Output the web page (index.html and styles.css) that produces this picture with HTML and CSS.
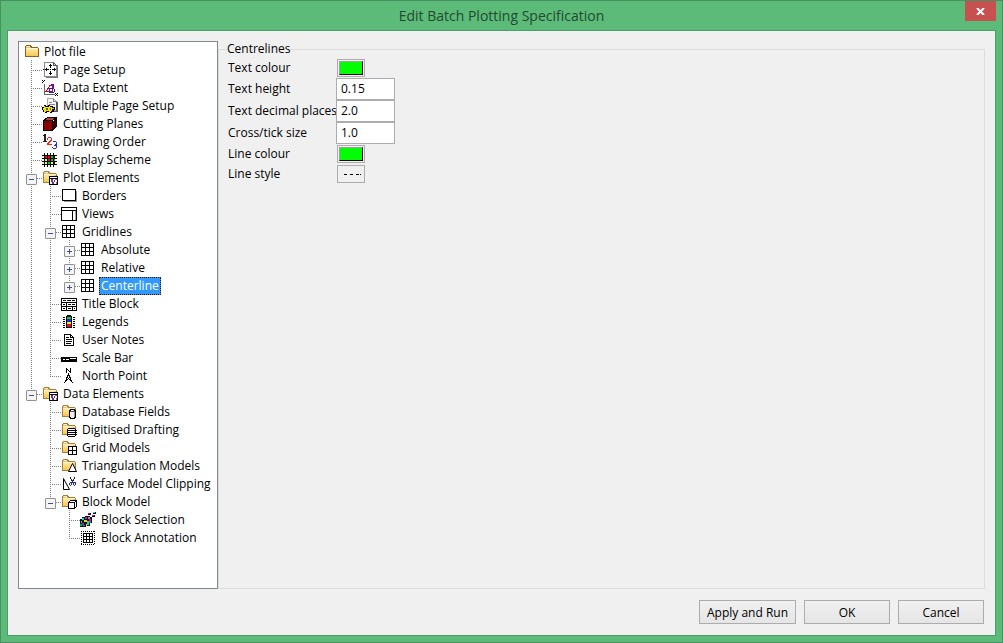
FILE: index.html
```html
<!DOCTYPE html>
<html lang="en">
  <head>
    <meta charset="UTF-8" />
    <meta name="viewport" content="width=device-width, initial-scale=1.0" />
    <title>Edit Batch Plotting Specification</title>
    <link rel="stylesheet" href="styles.css">
  </head>
  <body>
    <!-- shared icons -->
    <svg class="sprite" aria-hidden="true">
      <defs>
        <linearGradient id="folder-fill" x1="0" y1="0" x2="0" y2="1">
          <stop offset="0" stop-color="#ffeaa0" />
          <stop offset="1" stop-color="#f8c452" />
        </linearGradient>
      </defs>
      <symbol id="folder" viewBox="0 0 16 16">
        <path d="M1.500 12.500v-10l1-1h4l1 2h6l1 1v8z" fill="#e8c078" stroke="#8a5f24" />
        <path d="M2 5h12v7h-12z" fill="url(#folder-fill)" />
        <path d="M2 4.500h12M3 2.500h3" stroke="#fff6d6" fill="none" />
      </symbol>
      <symbol id="folder-small" viewBox="0 0 16 16">
        <path d="M.5 12.500v-10l1-1h4l1 2h6l1 1v8z" fill="#eec478" stroke="#a87c3c" />
        <path d="M1 5h10v7h-10z" fill="url(#folder-fill)" />
        <path d="M2 2.500h3M1 4.500h12" stroke="#fff2cc" fill="none" />
      </symbol>
      <symbol id="folder-plot" viewBox="0 0 16 16">
        <use href="#folder-small" />
        <path d="M6 6h9v9h-9z" fill="#000" />
        <path d="M7 7h7v1h-7zM7 9h7v5h-7z" fill="#fff" />
        <path d="M8 9h2v3h-2zM9 12h2v2h-2zM11 10h1v2h-1z" fill="#70307c" />
        <path d="M12 9h2v1h-2zM13 12h1v2h-1z" fill="#a050a0" />
      </symbol>
      <symbol id="grid" viewBox="0 0 16 16">
        <path d="M0 1h13v13h-13z" fill="#000" />
        <path d="M1 2h3v3h-3zM5 2h3v3h-3zM9 2h3v3h-3zM1 6h3v3h-3zM5 6h3v3h-3zM9 6h3v3h-3zM1 10h3v3h-3zM5 10h3v3h-3zM9 10h3v3h-3z" fill="#fff" />
      </symbol>
    </svg>

    <div class="window">
      <header class="titlebar">
        <h1>Edit Batch Plotting Specification</h1>
        <button class="close" aria-label="Close">
          <svg viewBox="0 0 9 7" width="9" height="7"><path d="M1 0L8 7M8 0L1 7" stroke="#fff" stroke-width="2" /></svg>
        </button>
      </header>

      <main class="content">
        <nav class="tree" aria-label="Plot file">
          <div class="row root">
            <svg class="icon"><use href="#folder" /></svg>
            <span class="label">Plot file</span>
          </div>
          <ul>
            <li>
              <div class="row">
                <svg class="icon" viewBox="0 0 16 16">
                  <path d="M13 3h2v13h-12v-1h10z" fill="#777" />
                  <path d="M1.500 .5h9l3 3v11h-12z" fill="#fff" stroke="#888" />
                  <path d="M10.500 .5v3h3z" fill="#ccc" stroke="#555" />
                  <path d="M7 2h1v4h-1zM7 9h1v4h-1zM2 7h4v1h-4zM9 7h4v1h-4zM6 3h3v1h-3zM6 11h3v1h-3zM3 6h1v3h-1zM11 6h1v3h-1zM7 7h1v1h-1zM0 7h1v1h-1z" />
                </svg>
                <span class="label">Page Setup</span>
              </div>
            </li>
            <li>
              <div class="row">
                <svg class="icon wide" viewBox="-1 0 17 16">
                  <path d="M-1 0h1v1h-1zM1 0h1v1h-1zM0 1h1v1h-1zM-1 2h1v1h-1z" />
                  <path d="M1.500 4v10.500h10" fill="none" stroke="#666" />
                  <path d="M3 11.500l4-6h2.500v6z" fill="none" stroke="#e00010" />
                  <path d="M7.500 4.500h3v4M6.500 12.500v-4h4l1 1v2l-1 1z" fill="none" stroke="#1024e8" />
                  <path d="M12 13h1v1h-1zM14 13h1v1h-1zM13 14h1v1h-1zM12 15h1v1h-1zM14 15h1v1h-1z" />
                </svg>
                <span class="label">Data Extent</span>
              </div>
            </li>
            <li>
              <div class="row">
                <svg class="icon wide" viewBox="-1 0 17 16">
                  <path d="M4.500 10v-9.500h6l3 3v9.500z" fill="#f4f4f4" stroke="#aaa" />
                  <path d="M10.500 .5v3h3M6 4.500h3M6 6.500h6" fill="none" stroke="#888" />
                  <path d="M13 4h2v10h-4v-1h2z" fill="#555" />
                  <path d="M1 7h2v1h2v-1h2v1h3v1h2v3h-1v2h-2v1h-2v-1h-3v1h-2v-1h-2v-2h-1v-3h2z" fill="#000" />
                  <path d="M1 8h1v1h4v-1h1v1h2v1h2v1h-2v2h-1v1h-2v-1h-3v1h-2v-2h-1v-2h1z" fill="#f4e400" />
                  <path d="M3 10h2v2h-2zM7 10h1v2h-1z" fill="#665c00" />
                </svg>
                <span class="label">Multiple Page Setup</span>
              </div>
            </li>
            <li>
              <div class="row">
                <svg class="icon" viewBox="0 0 16 16">
                  <path d="M.5 4.500l4-3h9v9l-4 4h-9z" fill="#fff" stroke="#000" />
                  <path d="M3 3.500l2-1.500h7l-2 2z" fill="#b04040" />
                  <path d="M1 5h8v9h-8z" fill="#8b0000" />
                  <path d="M10 5l3-3v8l-3 3z" fill="#400000" />
                  <path d="M.5 4.500h9v10M9.500 4.500l4-3" fill="none" stroke="#000" />
                </svg>
                <span class="label">Cutting Planes</span>
              </div>
            </li>
            <li>
              <div class="row">
                <svg class="icon" viewBox="0 0 16 16">
                  <path d="M0 1h1v-1h2v7h1v1h-4v-1h1v-5h-1z" fill="#222" />
                  <path d="M4.500 5.500v-1l1-1h2l1 1v1.500l-4 4v.5h4.500" fill="none" stroke="#ee2020" />
                  <path d="M9.500 8.500l1-1h2l1 1v1.500l-1 1h-1.500M12.500 11l1 1v1.500l-1 1h-2l-1-1" fill="none" stroke="#2030ee" />
                </svg>
                <span class="label">Drawing Order</span>
              </div>
            </li>
            <li>
              <div class="row">
                <svg class="icon wide" viewBox="-1 0 17 16">
                  <path d="M0 2h13v12h-13z" fill="#000" />
                  <path d="M2 4h2v2h-2zM5 4h2v2h-2zM5 7h2v2h-2z" fill="#f00" />
                  <path d="M8 4h2v2h-2zM8 7h2v2h-2zM5 10h2v2h-2zM11 7h1v2h-1z" fill="#0c0" />
                  <path d="M2 7h2v2h-2zM2 10h2v2h-2zM8 10h2v2h-2z" fill="#ff0" />
                  <path d="M1 1h1v14h-1zM4 1h1v14h-1zM7 1h1v14h-1zM10 1h1v14h-1zM-1 3h15v1h-15zM-1 6h15v1h-15zM-1 9h15v1h-15zM-1 12h15v1h-15z" />
                  <path d="M0 2h1v1h-1zM2 2h2v1h-2zM5 2h2v1h-2zM8 2h2v1h-2zM11 2h2v1h-2zM0 13h1v1h-1zM2 13h2v1h-2zM5 13h2v1h-2zM8 13h2v1h-2zM11 13h2v1h-2zM0 4h1v2h-1zM0 7h1v2h-1zM0 10h1v2h-1zM12 4h1v2h-1zM12 7h1v2h-1zM12 10h1v2h-1z" fill="#fff" />
                </svg>
                <span class="label">Display Scheme</span>
              </div>
            </li>
            <li>
              <details open>
                <summary class="row">
                  <svg class="icon"><use href="#folder-plot" /></svg>
                  <span class="label">Plot Elements</span>
                </summary>
                <ul>
                  <li>
                    <div class="row">
                      <svg class="icon" viewBox="0 0 16 16">
                        <path d="M2 3h13v11h-13z" fill="#999" />
                        <path d="M.5 1.500h13v11h-13z" fill="#fff" stroke="#000" />
                      </svg>
                      <span class="label">Borders</span>
                    </div>
                  </li>
                  <li>
                    <div class="row">
                      <svg class="icon wide" viewBox="-1 0 17 16">
                        <path d="M-.5 1.500h15v13h-15z" fill="#fff" stroke="#000" />
                        <path d="M0 4.500h14M10.500 4v10" stroke="#000" />
                        <path d="M13.500 5v9" stroke="#aaa" />
                      </svg>
                      <span class="label">Views</span>
                    </div>
                  </li>
                  <li>
                    <details open>
                      <summary class="row">
                        <svg class="icon"><use href="#grid" /></svg>
                        <span class="label">Gridlines</span>
                      </summary>
                      <ul>
                        <li>
                          <details>
                            <summary class="row">
                              <svg class="icon"><use href="#grid" /></svg>
                              <span class="label">Absolute</span>
                            </summary>
                          </details>
                        </li>
                        <li>
                          <details>
                            <summary class="row">
                              <svg class="icon"><use href="#grid" /></svg>
                              <span class="label">Relative</span>
                            </summary>
                          </details>
                        </li>
                        <li>
                          <details>
                            <summary class="row">
                              <svg class="icon"><use href="#grid" /></svg>
                              <span class="label selected">Centerline</span>
                            </summary>
                          </details>
                        </li>
                      </ul>
                    </details>
                  </li>
                  <li>
                    <div class="row">
                      <svg class="icon wide" viewBox="-1 0 17 16">
                        <path d="M-1 2h16v13h-16z" fill="#000" />
                        <path d="M0 3h14v3h-14zM0 7h4v3h-4zM5 7h9v3h-9zM0 11h4v3h-4zM5 11h5v3h-5zM11 11h3v3h-3z" fill="#fff" />
                        <path d="M1 4h3v1h-3zM5 4h4v1h-4zM10 4h3v1h-3zM1 8h2v1h-2zM6 8h3v1h-3zM10 8h3v1h-3zM1 12h2v1h-2zM6 12h3v1h-3zM12 12h1v1h-1z" />
                      </svg>
                      <span class="label">Title Block</span>
                    </div>
                  </li>
                  <li>
                    <div class="row">
                      <svg class="icon" viewBox="0 0 16 16">
                        <path d="M4 2h6v12h-6zM5 1h4v1h-4z" fill="#000" />
                        <path d="M5 3h4v2h-4z" fill="#0d0" />
                        <path d="M5 5h4v3h-4z" fill="#22f" />
                        <path d="M5 8h4v2h-4z" fill="#ee0" />
                        <path d="M5 10h4v3h-4z" fill="#f00" />
                        <path d="M2 3v11M12 3v11" stroke="#000" stroke-width="2" stroke-dasharray="1 1" />
                      </svg>
                      <span class="label">Legends</span>
                    </div>
                  </li>
                  <li>
                    <div class="row">
                      <svg class="icon" viewBox="0 0 16 16">
                        <path d="M2.500 2.500h6l3 3v8h-9z" fill="#fff" stroke="#000" />
                        <path d="M8.500 2.500v3h3M4 5.500h3M4 7.500h6M4 9.500h6M4 11.500h5" fill="none" stroke="#000" />
                      </svg>
                      <span class="label">User Notes</span>
                    </div>
                  </li>
                  <li>
                    <div class="row">
                      <svg class="icon wide" viewBox="-1 0 17 16">
                        <path d="M-1 7h16v5h-16z" fill="#000" />
                        <path d="M1 9h2v1h-2zM4 9h3v1h-3zM8 8h6v1h-6z" fill="#fff" />
                      </svg>
                      <span class="label">Scale Bar</span>
                    </div>
                  </li>
                  <li>
                    <div class="row">
                      <svg class="icon" viewBox="0 0 16 16">
                        <path d="M4 0h1v5h-1zM8 0h1v5h-1zM5 1h1v1h-1zM6 2h1v1h-1zM7 3h1v1h-1z" />
                        <path d="M6 5h1v3h-1zM5 7h1v3h-1zM7 7h1v3h-1zM4 9h1v3h-1zM8 9h1v3h-1zM3 12h1v2h-1zM9 12h1v2h-1zM2 14h1v1h-1zM10 14h1v1h-1zM5 11h1v1h-1zM6 10h1v1h-1zM7 11h1v1h-1zM4 12h1v1h-1zM8 12h1v1h-1z" />
                      </svg>
                      <span class="label">North Point</span>
                    </div>
                  </li>
                </ul>
              </details>
            </li>
            <li>
              <details open>
                <summary class="row">
                  <svg class="icon"><use href="#folder-plot" /></svg>
                  <span class="label">Data Elements</span>
                </summary>
                <ul>
                  <li>
                    <div class="row">
                      <svg class="icon" viewBox="0 0 16 16">
                        <use href="#folder-small" />
                        <path d="M7.500 6.500l2-1h2l2 1v7l-2 1h-2l-2-1z" fill="#eee" stroke="#000" />
                        <path d="M12 8h1v5h-1z" fill="#999" />
                        <path d="M8 7.500h5" stroke="#555" />
                      </svg>
                      <span class="label">Database Fields</span>
                    </div>
                  </li>
                  <li>
                    <div class="row">
                      <svg class="icon" viewBox="0 0 16 16">
                        <use href="#folder-small" />
                        <path d="M6 6h7v1h1v7h-9v-7h1z" fill="#fff" />
                        <path d="M6 6.500h7M5 8.500h10M5 10.500h10M5 12.500h10M6 14.500h7M5.500 7v7M13.500 7v7" stroke="#000" />
                      </svg>
                      <span class="label">Digitised Drafting</span>
                    </div>
                  </li>
                  <li>
                    <div class="row">
                      <svg class="icon" viewBox="0 0 16 16">
                        <use href="#folder-small" />
                        <path d="M6.500 6.500h8v8h-8zM10.500 6.500v8M6.500 10.500h8" fill="#fff" stroke="#000" />
                      </svg>
                      <span class="label">Grid Models</span>
                    </div>
                  </li>
                  <li>
                    <div class="row">
                      <svg class="icon" viewBox="0 0 16 16">
                        <use href="#folder-small" />
                        <path class="smooth" d="M10.500 5.500l4 8h-8z" fill="#fff" stroke="#000" />
                      </svg>
                      <span class="label">Triangulation Models</span>
                    </div>
                  </li>
                  <li>
                    <div class="row">
                      <svg class="icon" viewBox="0 0 16 16">
                        <path class="smooth" d="M1.500 2.500v11h6z" fill="#fff" stroke="#000" />
                        <path d="M8 1h1v2h-1zM9 3h1v2h-1zM10 5h1v1h-1zM12 1h1v2h-1zM11 3h1v2h-1z" fill="#222" />
                        <path d="M8 6h6v1h-6zM7 7h1v2h-1zM9 7h1v2h-1zM8 9h1v1h-1zM11 7h1v2h-1zM13 7h1v2h-1zM12 9h1v1h-1zM10 4h1v2h-1z" fill="#1a2a9c" />
                      </svg>
                      <span class="label">Surface Model Clipping</span>
                    </div>
                  </li>
                  <li>
                    <details open>
                      <summary class="row">
                        <svg class="icon" viewBox="0 0 16 16">
                          <use href="#folder-small" />
                          <path d="M6.500 8.500l2-2h6v6l-2 2h-6z" fill="#fff" stroke="#000" />
                          <path d="M6.500 8.500h6v6M12.500 8.500l2-2" fill="none" stroke="#000" />
                        </svg>
                        <span class="label">Block Model</span>
                      </summary>
                      <ul>
                        <li>
                          <div class="row">
                            <svg class="icon wide" viewBox="-1 0 17 16">
                              <path d="M-1 7h2v-2h3v-1h5v1h2v6h-2v3h-4v1h-6z" fill="#111" />
                              <path d="M1 6h2v2h-2zM6 11h2v2h-2zM0 9h1v2h-1z" fill="#0dd" />
                              <path d="M4 5h2v2h-2zM1 11h2v2h-2zM8 7h2v2h-2z" fill="#d0d" />
                              <path d="M3 8h3v2h-3zM5 12h1v2h-1z" fill="#dd0" />
                              <path d="M-1 12h2v2h-2zM2 13h2v1h-2zM8 9h2v2h-2z" fill="#0a5" />
                              <path d="M7 5h2v2h-2zM6 9h2v2h-2z" fill="#999" />
                              <path d="M7 1h3v2h-3zM12 0h3v2h-3zM11 3h3v2h-3z" fill="#111" />
                              <path d="M7 1h2v1h-2zM11 3h2v1h-2z" fill="#d0a" />
                              <path d="M12 0h2v1h-2z" fill="#0dd" />
                            </svg>
                            <span class="label">Block Selection</span>
                          </div>
                        </li>
                        <li>
                          <div class="row">
                            <svg class="icon" viewBox="0 0 16 16">
                              <path d="M2 3h10v10h-10z" fill="#000" />
                              <path d="M3 4h2v2h-2zM6 4h2v2h-2zM9 4h2v2h-2zM3 7h2v2h-2zM6 7h2v2h-2zM9 7h2v2h-2zM3 10h2v2h-2zM6 10h2v2h-2zM9 10h2v2h-2z" fill="#fff" />
                              <path d="M0 1.500h14M0 14.500h14M.5 1v14M13.500 1v14" stroke="#000" stroke-dasharray="1 1" />
                            </svg>
                            <span class="label">Block Annotation</span>
                          </div>
                        </li>
                      </ul>
                    </details>
                  </li>
                </ul>
              </details>
            </li>
          </ul>
        </nav>

        <fieldset class="group">
          <legend>Centrelines</legend>
          <div class="fields">
            <label for="text-colour">Text colour</label>
            <button id="text-colour" class="picker"><span class="swatch"></span></button>
            <label for="text-height">Text height</label>
            <input id="text-height" type="text" value="0.15" />
            <label for="decimals">Text decimal places</label>
            <input id="decimals" type="text" value="2.0" />
            <label for="tick-size">Cross/tick size</label>
            <input id="tick-size" type="text" value="1.0" />
            <label for="line-colour">Line colour</label>
            <button id="line-colour" class="picker"><span class="swatch"></span></button>
            <label for="line-style">Line style</label>
            <button id="line-style" class="picker">
              <svg class="icon-line" viewBox="0 0 20 1" width="20" height="1"><path d="M3 .5h3M9 .5h3M15 .5h3M19 .5h1" stroke="#000" /></svg>
            </button>
          </div>
        </fieldset>

        <footer class="actions">
          <button class="wide-button">Apply and Run</button>
          <button>OK</button>
          <button>Cancel</button>
        </footer>
      </main>
    </div>
  </body>
</html>
```

FILE: styles.css
```css
* {
  box-sizing: border-box;
}

body {
  margin: 0;
  font-family: "Open Sans", "Noto Sans", sans-serif;
  font-size: 12px;
  color: #000;
}

button,
input {
  font: inherit;
  color: inherit;
}

.sprite {
  position: absolute;
  width: 0;
  height: 0;
}

.window {
  display: flex;
  flex-direction: column;
  min-height: 100vh;
  padding: 0 6px 6px;
  background: #5cbb79;
  border: 1px solid #479160;
}

/* Title bar */
.titlebar {
  display: grid;
  grid-template-columns: 31px 1fr 31px;
  height: 29px;
}

.titlebar h1 {
  grid-column: 2;
  margin: 0;
  font-size: 14px;
  font-weight: normal;
  line-height: 29px;
  text-align: center;
  color: #234a30;
}

.close {
  display: flex;
  align-items: center;
  justify-content: center;
  height: 20px;
  padding: 0;
  background: #c75050;
  border: none;
}

.content {
  flex: 1;
  display: grid;
  grid-template-columns: 200px 1fr;
  grid-template-rows: 1fr auto;
  row-gap: 11px;
  padding: 10px 10px 11px;
  background: #f0f0f0;
  border: 1px solid #4a9d65;
}

/* Tree */
.tree {
  background: #fff;
  border: 1px solid #828790;
}

.tree ul {
  margin: 0;
  padding: 0;
  list-style: none;
}

.tree > ul {
  margin-left: 12px;
}

.tree details > ul {
  margin-left: 19px;
}

.tree li {
  background: repeating-linear-gradient(#808080 0 1px, transparent 1px 2px) 0 0 / 1px 100% no-repeat;
}

.tree li:last-child {
  background-size: 1px 11px;
}

.row {
  display: flex;
  align-items: center;
  gap: 2px;
  height: 18px;
  padding: 2px 0 0 12px;
  background: repeating-linear-gradient(90deg, #808080 0 1px, transparent 1px 2px) 0 10px / 12px 1px no-repeat;
  cursor: default;
}

.row.root {
  padding-left: 5px;
  background: none;
}

/* plus / minus box */
summary.row::before {
  content: "";
  flex: none;
  width: 9px;
  height: 9px;
  margin: 2px 5px 0 -16px;
  border: 1px solid #919191;
  border-radius: 1px;
  background:
    linear-gradient(#3c50a0, #3c50a0) center / 5px 1px no-repeat,
    linear-gradient(#3c50a0, #3c50a0) center / 1px 5px no-repeat,
    #f4f4f4;
}

details[open] > summary.row::before {
  background:
    linear-gradient(#3c50a0, #3c50a0) center / 5px 1px no-repeat,
    #f4f4f4;
}

summary.row {
  padding-left: 11px;
}

summary .icon {
  margin-left: -1px;
}

.icon {
  flex: none;
  width: 16px;
  height: 16px;
  shape-rendering: crispEdges;
}

.icon.wide {
  width: 17px;
  margin-left: -1px;
}

.smooth {
  shape-rendering: auto;
}

.label {
  padding: 0 2px;
  line-height: 18px;
  white-space: nowrap;
}

.label.selected {
  color: #fff;
  background: #3399ff;
  outline: 1px dotted #301800;
  outline-offset: -1px;
}

/* Settings */
.group {
  min-width: 0;
  margin: 0;
  padding: 0 8px;
  border: 1px solid #dcdcdc;
}

.group legend {
  padding: 0;
  line-height: 16px;
}

.fields {
  display: grid;
  grid-template-columns: 108px 59px;
  grid-template-rows: 20px 22px 22px 22px 20px 20px;
  align-items: center;
  padding: 1px;
}

.fields label {
  padding-bottom: 2px;
  white-space: nowrap;
}

.fields input {
  width: 100%;
  height: 22px;
  padding: 0 4px 2px;
  background: #fff;
  border: 1px solid #abadb3;
}

.picker {
  display: flex;
  align-items: center;
  justify-content: center;
  width: 28px;
  height: 18px;
  margin-left: 1px;
  padding: 0;
  background: #f0f0f0;
  border: 1px solid #adadad;
}

.swatch {
  width: 24px;
  height: 14px;
  background: #00ff00;
  border: 1px solid #000;
  border-top-color: #a0a0a0;
  border-left-color: #a0a0a0;
}

.icon-line {
  shape-rendering: crispEdges;
}

/* Bottom buttons */
.actions {
  grid-column: 1 / -1;
  display: flex;
  justify-content: flex-end;
  gap: 8px;
  padding-right: 1px;
}

.actions button {
  width: 86px;
  height: 24px;
  padding: 0;
  background: linear-gradient(#f0f0f0, #e5e5e5);
  border: 1px solid #acacac;
}

.actions .wide-button {
  width: 97px;
}
```
